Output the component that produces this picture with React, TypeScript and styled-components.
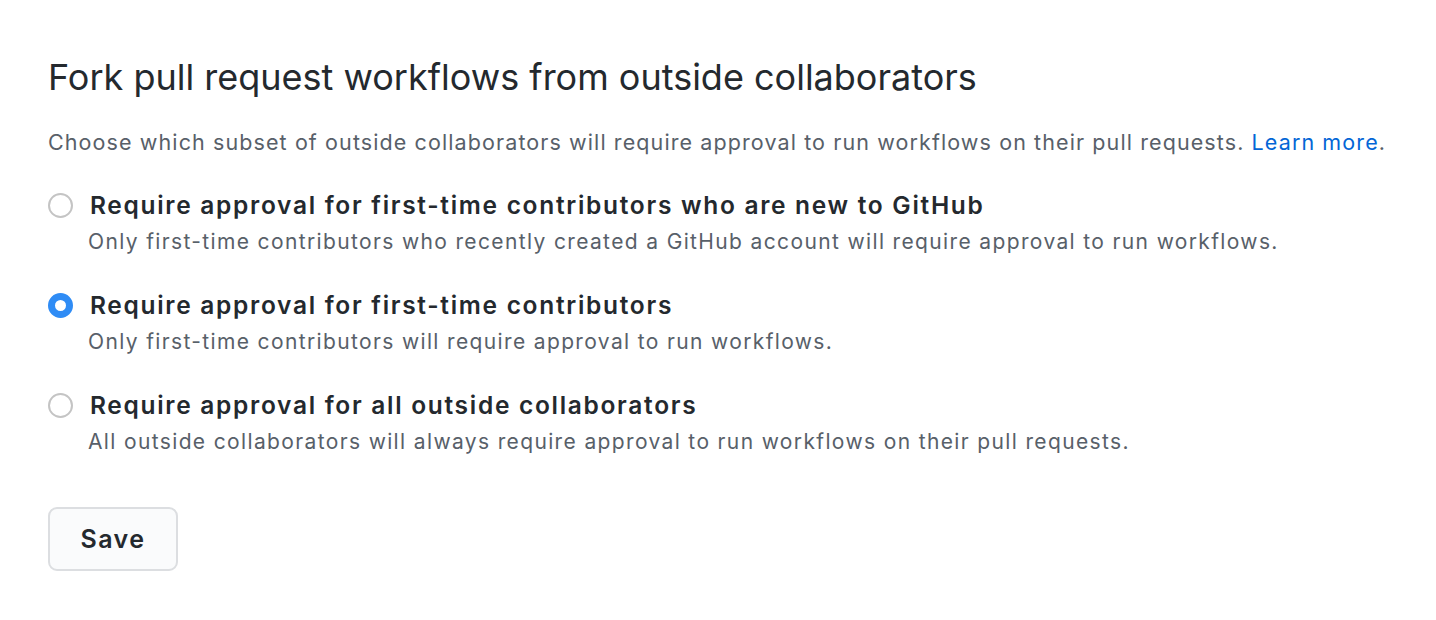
import React, { useState } from "react";
import styled, { createGlobalStyle } from "styled-components";

const options = [
  {
    id: "new",
    label: "Require approval for first-time contributors who are new to GitHub",
    note: "Only first-time contributors who recently created a GitHub account will require approval to run workflows.",
  },
  {
    id: "first",
    label: "Require approval for first-time contributors",
    note: "Only first-time contributors will require approval to run workflows.",
  },
  {
    id: "all",
    label: "Require approval for all outside collaborators",
    note: "All outside collaborators will always require approval to run workflows on their pull requests.",
  },
];

const App = () => {
  const [policy, setPolicy] = useState("first");

  return (
    <>
      <GlobalStyle />
      <Wrapper>
        <Title>Fork pull request workflows from outside collaborators</Title>
        <Description>
          Choose which subset of outside collaborators will require approval to run workflows on their
          pull requests. <Link href="#">Learn more</Link>.
        </Description>
        <OptionList>
          {options.map((opt) => (
            <Option key={opt.id} onClick={() => setPolicy(opt.id)}>
              <Radio $checked={policy === opt.id} />
              <OptionText>
                <OptionLabel>{opt.label}</OptionLabel>
                <OptionNote>{opt.note}</OptionNote>
              </OptionText>
            </Option>
          ))}
        </OptionList>
        <SaveButton type="button">Save</SaveButton>
      </Wrapper>
    </>
  );
};

export default App;

const GlobalStyle = createGlobalStyle`
  body {
    margin: 0;
    background: #ffffff;
    font-family: Inter, "Liberation Sans", sans-serif;
    color: #24292e;
  }
`;

const Wrapper = styled.div`
  display: flex;
  flex-direction: column;
  align-items: flex-start;
  padding: 52px 48px 48px 48px;
`;

const Title = styled.h2`
  margin: 0;
  font-size: 36px;
  line-height: 50px;
  font-weight: 400;
  color: #24292e;
`;

const Description = styled.p`
  margin: 24px 0 0 0;
  font-size: 21.5px;
  line-height: 32px;
  letter-spacing: 1.1px;
  color: #586069;
`;

const Link = styled.a`
  color: #0366d6;
  text-decoration: none;
`;

const OptionList = styled.div`
  display: flex;
  flex-direction: column;
  gap: 27px;
  margin-top: 30px;
`;

const Option = styled.label`
  display: flex;
  align-items: flex-start;
  gap: 17px;
  cursor: pointer;
`;

const Radio = styled.span<{ $checked: boolean }>`
  flex: none;
  box-sizing: border-box;
  width: 25px;
  height: 25px;
  margin-top: 5px;
  border-radius: 50%;
  background: #ffffff;
  border: ${(p) => (p.$checked ? "7px solid #2f8cf5" : "2px solid #c4c4c4")};
`;

const OptionText = styled.div`
  display: flex;
  flex-direction: column;
`;

const OptionLabel = styled.div`
  font-size: 24.5px;
  line-height: 35px;
  font-weight: 600;
  letter-spacing: 1.7px;
  color: #24292e;
`;

const OptionNote = styled.div`
  margin-left: -2px;
  font-size: 21px;
  line-height: 38px;
  letter-spacing: 1.36px;
  color: #586069;
`;

const SaveButton = styled.button`
  margin-top: 46px;
  width: 130px;
  height: 64px;
  border: 2px solid #dcdee1;
  border-radius: 9px;
  background: #fafbfc;
  font-family: inherit;
  font-size: 25px;
  font-weight: 600;
  letter-spacing: 1.5px;
  color: #24292e;
  cursor: pointer;
`;
